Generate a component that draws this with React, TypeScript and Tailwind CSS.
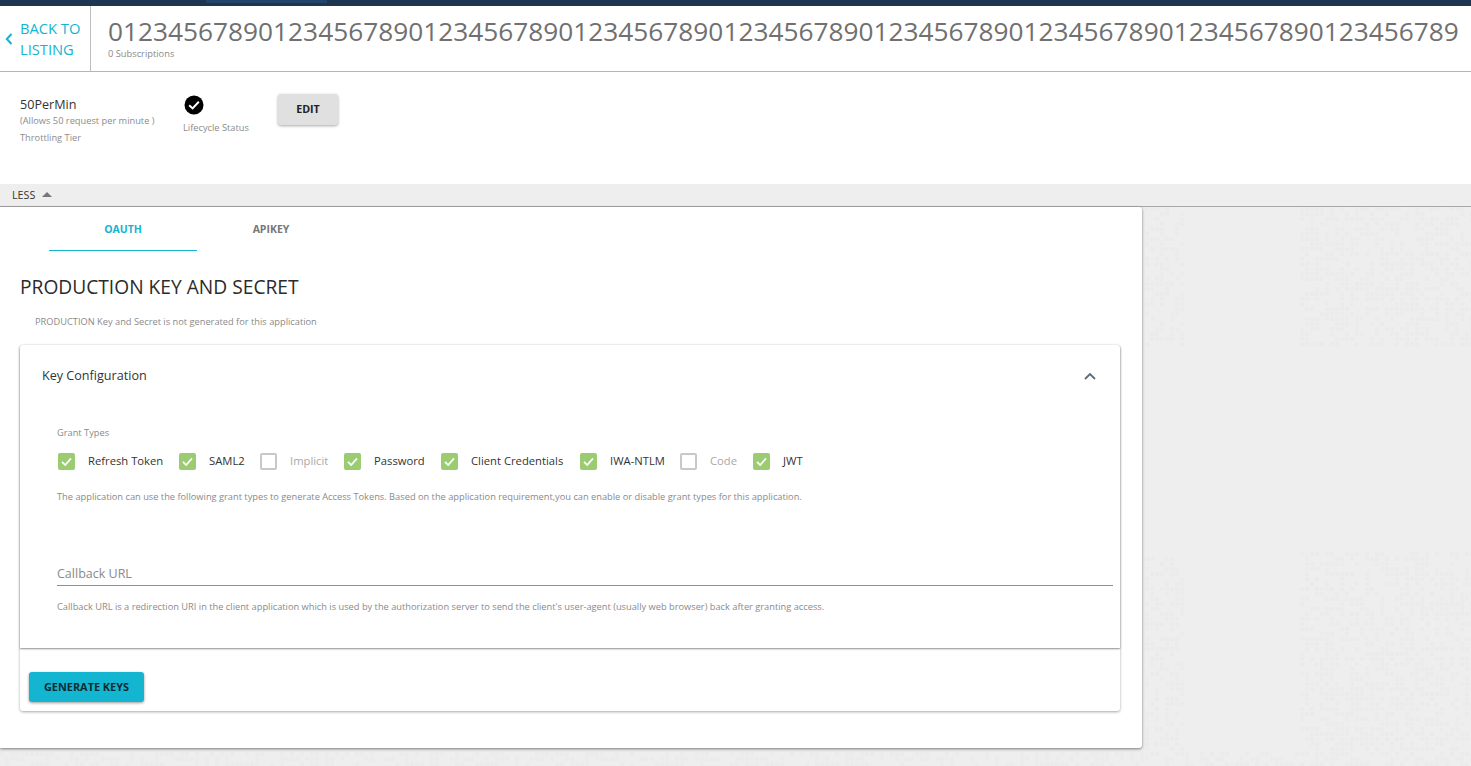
const grantTypes = [
  { label: 'Refresh Token', checked: true, gap: 'w-[121px]' },
  { label: 'SAML2', checked: true, gap: 'w-[81px]' },
  { label: 'Implicit', checked: false, gap: 'w-[84px]' },
  { label: 'Password', checked: true, gap: 'w-[97px]' },
  { label: 'Client Credentials', checked: true, gap: 'w-[139px]' },
  { label: 'IWA-NTLM', checked: true, gap: 'w-[100px]' },
  { label: 'Code', checked: false, gap: 'w-[73px]' },
  { label: 'JWT', checked: true, gap: 'w-[50px]' },
];

// the faint speckle of the page background, same result on every render
function buildSpeckle() {
  let seed = 12345;
  const next = () => {
    seed = (seed * 1103515 + 12345) % 2147483648;
    return seed / 2147483648;
  };
  let d = '';
  for (let y = 207; y < 766; y += 5) {
    for (let x = 0; x < 1471; x += 5) {
      const inColumn = (x >= 1143 && x < 1184) || x >= 1298;
      const inRow = y < 346 || y >= 552;
      const bottomStrip = y >= 750;
      if (((inColumn && inRow) || bottomStrip) && next() < 0.5) {
        d += `M${x} ${y}h4v4h-4z`;
      }
    }
  }
  return d;
}

const speckle = buildSpeckle();

function GrantCheckbox({ label, checked, gap }: { label: string; checked: boolean; gap: string }) {
  return (
    <div className={`flex items-center shrink-0 ${gap}`}>
      {checked ? (
        <span className="w-[17px] h-[17px] rounded-[2px] bg-[#9ccc72] flex items-center justify-center shrink-0">
          <svg width="13" height="13" viewBox="0 0 13 13" fill="none">
            <path d="M2 6.8 L5.2 10 L11 3.4" stroke="#ffffff" strokeWidth="1.7" />
          </svg>
        </span>
      ) : (
        <span className="w-[17px] h-[17px] rounded-[2px] border-2 border-[#c8c8c8] bg-white shrink-0" />
      )}
      <span className={`ml-[13px] text-[11.25px] leading-none whitespace-nowrap ${checked ? 'text-[#333333]' : 'text-[#a8a8a8]'}`}>
        {label}
      </span>
    </div>
  );
}

export default function App() {
  return (
    <div className="relative isolate w-[1471px] h-[766px] overflow-hidden bg-[#eeeeee] font-['Open_Sans',sans-serif]">
      <svg width="1471" height="766" className="absolute inset-0 -z-10">
        <path d={speckle} fill="#ebebeb" />
      </svg>

      <div className="h-[6px] bg-[#1c3551] shadow-[0_1px_3px_rgba(0,0,0,0.4)]">
        <div className="ml-[206px] w-[121px] h-[3px] bg-[#24436a]" />
      </div>

      <div className="h-[66px] bg-white border-b border-[#b5b5b5] flex">
        <div className="w-[91px] border-r border-[#bdbdbd] flex items-center shrink-0">
          <svg width="8" height="12" viewBox="0 0 8 12" fill="none" className="ml-[5px] shrink-0">
            <path d="M6.5 1 L1.8 6 L6.5 11" stroke="#14b5d0" strokeWidth="2" />
          </svg>
          <div className="ml-[7px] text-[14.7px] leading-[21px] text-[#14b5d0]">
            BACK TO
            <br />
            LISTING
          </div>
        </div>
        <div className="pl-[17px] pt-[7px]">
          <div className="text-[26.25px] leading-[36px] text-[#707070] whitespace-nowrap">
            012345678901234567890123456789012345678901234567890123456789012345678901234567890123456789
          </div>
          <div className="text-[9.3px] leading-[12px] mt-[-1px] text-[#8a8a8a]">0 Subscriptions</div>
        </div>
      </div>

      <div className="h-[112px] bg-white flex pt-[23px]">
        <div className="ml-[20px] w-[163px] shrink-0">
          <div className="text-[12.6px] leading-[20px] text-[#333333]">50PerMin</div>
          <div className="text-[9.27px] leading-[14px] mt-[-1px] text-[#8c8c8c]">(Allows 50 request per minute )</div>
          <div className="text-[9.27px] leading-[14px] mt-[3px] text-[#8c8c8c]">Throttling Tier</div>
        </div>
        <div className="w-[95px] shrink-0">
          <svg width="20" height="20" viewBox="0 0 20 20" className="ml-[1px]">
            <circle cx="10" cy="10" r="9.5" fill="#000000" />
            <path d="M5.2 10.2 L8.6 13.4 L14.8 6.8" stroke="#ffffff" strokeWidth="2" fill="none" />
          </svg>
          <div className="text-[9.27px] leading-[14px] mt-[6px] text-[#8c8c8c]">Lifecycle Status</div>
        </div>
        <button className="w-[60px] h-[31px] mt-[-1px] bg-[#e0e0e0] rounded-[3px] text-[10.7px] font-bold text-[#222222] shadow-[0_1px_3px_rgba(0,0,0,0.35)]">
          EDIT
        </button>
      </div>

      <div className="h-[23px] bg-[#eeeeee] border-b border-[#a8a8a8] flex items-center pl-[12px] pt-[1px]">
        <span className="text-[10.7px] text-[#333333]">LESS</span>
        <span className="ml-[7px] mb-[2px] w-0 h-0 border-l-[5px] border-r-[5px] border-b-[5px] border-l-transparent border-r-transparent border-b-[#777777]" />
      </div>

      <div className="w-[1142px] h-[541px] bg-white rounded-r-[3px] shadow-[0_1px_3px_rgba(0,0,0,0.5)]">
        <div className="flex pl-[49px] h-[44px]">
          <div className="w-[148px] pt-[2px] border-b border-[#14b5d0] flex items-center justify-center text-[10.5px] font-bold text-[#14b5d0]">
            OAUTH
          </div>
          <div className="w-[148px] pt-[1px] flex items-center justify-center text-[10.5px] font-bold text-[#777777]">
            APIKEY
          </div>
        </div>

        <h2 className="ml-[20px] mt-[23px] text-[19.2px] leading-[26px] text-[#2b2b2b]">PRODUCTION KEY AND SECRET</h2>
        <p className="ml-[35px] mt-[16px] text-[9.27px] leading-[12px] text-[#8a8a8a]">
          PRODUCTION Key and Secret is not generated for this application
        </p>

        <div className="ml-[20px] mt-[17px] w-[1100px] rounded-[3px] shadow-[0_1px_3px_rgba(0,0,0,0.35)]">
          <div className="h-[303px] rounded-t-[3px] shadow-[0_1px_2px_rgba(0,0,0,0.45)]">
            <div className="h-[62px] flex items-center justify-between pl-[22px] pr-[24px]">
              <span className="text-[12.6px] text-[#333333]">Key Configuration</span>
              <svg width="12" height="8" viewBox="0 0 12 8" fill="none">
                <path d="M1 7 L6 2 L11 7" stroke="#5f6b76" strokeWidth="1.8" />
              </svg>
            </div>
            <div className="pl-[37px] pt-[20px]">
              <div className="text-[9.27px] leading-[12px] text-[#8a8a8a]">Grant Types</div>
              <div className="flex mt-[12px] pl-[1px] h-[20px]">
                {grantTypes.map(g => (
                  <GrantCheckbox key={g.label} {...g} />
                ))}
              </div>
              <p className="mt-[20px] text-[9.27px] leading-[12px] text-[#8a8a8a]">
                The application can use the following grant types to generate Access Tokens. Based on the application requirement,you can enable or disable grant types for this application.
              </p>
              <div className="mt-[61px] mr-[7px] h-[22px] border-b border-[#8f8f8f] text-[12.5px] leading-[20px] text-[#8a8a8a]">
                Callback URL
              </div>
              <p className="mt-[15px] text-[9.27px] leading-[12px] text-[#8a8a8a]">
                Callback URL is a redirection URI in the client application which is used by the authorization server to send the client's user-agent (usually web browser) back after granting access.
              </p>
            </div>
          </div>
          <div className="h-[63px] pl-[9px] pt-[24px]">
            <button className="w-[115px] h-[30px] rounded-[3px] bg-[#14b5d0] text-[10.9px] font-bold text-[#0d2b33] shadow-[0_1px_3px_rgba(0,0,0,0.4)]">
              GENERATE KEYS
            </button>
          </div>
        </div>
      </div>
    </div>
  );
}
